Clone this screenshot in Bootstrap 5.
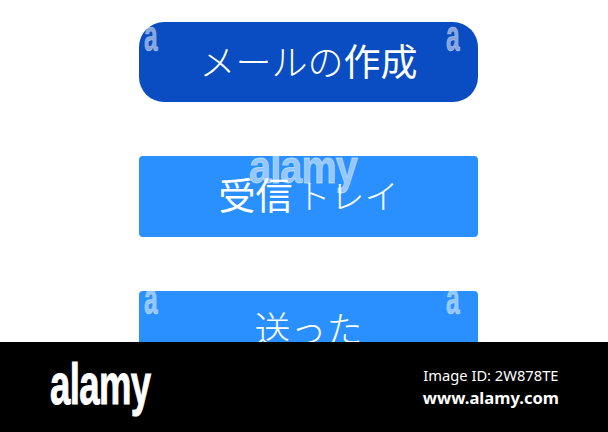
<!DOCTYPE html>
<html lang="ja">
<head>
<meta charset="utf-8">
<link href="https://cdn.jsdelivr.net/npm/bootstrap@5.3.0/dist/css/bootstrap.min.css" rel="stylesheet">
<style>
html,body{margin:0;height:432px;overflow:hidden;background:#fff}
.stage{height:342px;overflow:hidden;padding:22px 0 0 9px;gap:54px;position:relative}
.mail-btn{width:339px;height:81px;flex:none;border:0;padding:0 0 4px;color:#fff;font-family:"Noto Sans CJK JP",sans-serif;font-size:34px;line-height:1;position:relative;background:#2a90ff;border-radius:4px}
.mail-btn.compose{height:80px;background:#0a4cc2;border-radius:25px}
.lite{font-weight:300}
.wide{font-size:36px}
.kanji{font-size:37px;font-weight:400}
.third{padding-top:18px;align-items:flex-start!important;font-size:36px}
.wm{position:absolute;color:rgba(255,255,255,.5);font-family:"Liberation Sans",sans-serif;font-weight:700;line-height:1;transform-origin:left top}
.wm-a{font-size:44px;transform:scaleX(.56);-webkit-text-stroke:.6px rgba(255,255,255,.5)}
.wm-l{left:5px;top:-8px}
.wm-r{left:307px;top:-8px}
.third .wm-l,.third .wm-r{top:-14px}
.wm-mid{font-size:46px;left:110px;top:-12px;transform:scaleX(.86);letter-spacing:-1px;-webkit-text-stroke:.8px rgba(255,255,255,.5)}
.foot{height:90px;background:#000;color:#fff}
.logo{font-family:"Liberation Sans",sans-serif;font-weight:700;font-size:58px;line-height:1;transform:scaleX(.63);transform-origin:left center;letter-spacing:-1px;margin-left:50px;margin-top:-6px;width:200px;-webkit-text-stroke:1px #fff}
.foot-info{margin-right:49px;font-family:"Noto Sans","DejaVu Sans",sans-serif;text-align:center}
.img-id{font-size:14.7px;line-height:18px;margin-bottom:4px}
.site{font-size:16.6px;font-weight:700;line-height:20px}
</style>
</head>
<body>
<main class="stage d-flex flex-column align-items-center">
  <button class="mail-btn compose d-flex align-items-center justify-content-center" type="button">
    <span class="wm wm-a wm-l">a</span><span class="wm wm-a wm-r">a</span>
    <span class="lite wide">メールの</span><span class="kanji">作成</span>
  </button>
  <button class="mail-btn d-flex align-items-center justify-content-center" type="button">
    <span class="wm wm-mid">alamy</span>
    <span class="kanji">受信</span><span class="lite ms-1">トレイ</span>
  </button>
  <button class="mail-btn third d-flex justify-content-center" type="button">
    <span class="wm wm-a wm-l">a</span><span class="wm wm-a wm-r">a</span>
    <span class="lite">送った</span>
  </button>
</main>
<footer class="foot d-flex align-items-center justify-content-between">
  <div class="logo">alamy</div>
  <div class="foot-info">
    <div class="img-id">Image ID: 2W878TE</div>
    <div class="site">www.alamy.com</div>
  </div>
</footer>
</body>
</html>
